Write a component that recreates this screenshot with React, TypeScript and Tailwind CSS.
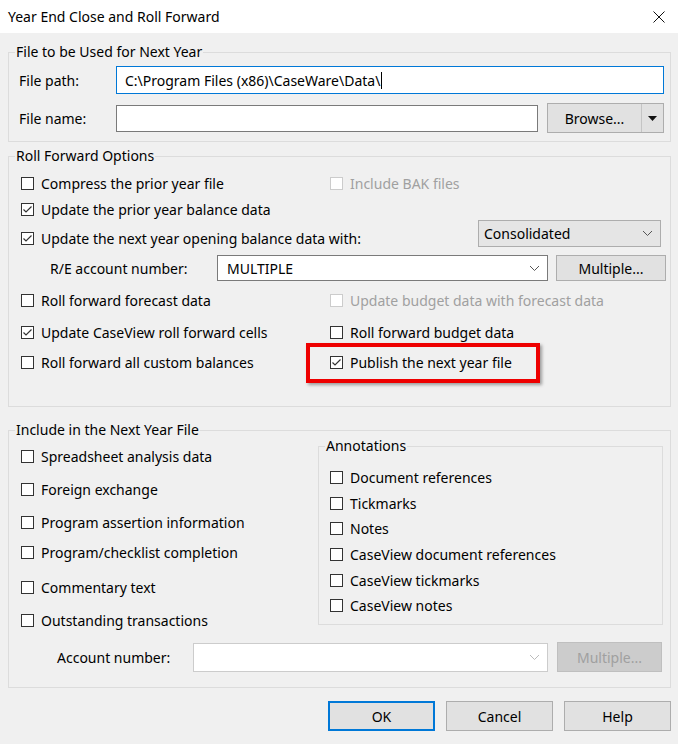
import { ReactNode } from 'react'

function Check({ label, checked = false, disabled = false }: { label: string; checked?: boolean; disabled?: boolean }) {
  return (
    <div className="flex items-center h-[20px]">
      <span
        className={
          'flex h-[13px] w-[13px] shrink-0 items-center justify-center border bg-white ' +
          (disabled ? 'border-[#cccccc]' : 'border-[#333333]')
        }
      >
        {checked && (
          <svg width="11" height="11" viewBox="0 0 11 11">
            <polyline points="1.5,5.5 4,8 9.5,2.5" fill="none" stroke="#333" strokeWidth="1.2" />
          </svg>
        )}
      </span>
      <span className={'ml-[7px] whitespace-nowrap ' + (disabled ? 'text-[#a0a0a0]' : 'text-black')}>{label}</span>
    </div>
  )
}

function Chevron({ color = '#555' }: { color?: string }) {
  return (
    <svg width="11" height="7" viewBox="0 0 11 7">
      <polyline points="1,1 5.5,5.5 10,1" fill="none" stroke={color} strokeWidth="1" />
    </svg>
  )
}

function Group({ title, className, children }: { title: string; className?: string; children: ReactNode }) {
  return (
    <fieldset className={'border border-[#dcdcdc] ' + (className ?? '')}>
      <legend className="ml-[6px] px-[1px] leading-[20px]">{title}</legend>
      {children}
    </fieldset>
  )
}

export default function App() {
  return (
    <div className="w-[678px] h-[744px] bg-[#f0f0f0] text-[14px] text-black font-['Noto_Sans',sans-serif] overflow-hidden">
      {/* Title bar */}
      <div className="flex h-[33px] items-center justify-between bg-white pl-[8px] pr-[13px]">
        <span className="text-[14px]">Year End Close and Roll Forward</span>
        <svg width="12" height="12" viewBox="0 0 12 12">
          <path d="M0.5 0.5 L11.5 11.5 M11.5 0.5 L0.5 11.5" stroke="#111" strokeWidth="1" />
        </svg>
      </div>

      <div className="pl-[8px] pr-[7px]">
        {/* File to be Used for Next Year */}
        <Group title="File to be Used for Next Year" className="mt-[9px]">
          <div className="pl-[10px] pr-[6px] pt-[4px] pb-[8px]">
            <div className="flex h-[28px] items-center">
              <span className="w-[97px]">File path:</span>
              <div className="flex h-[28px] flex-1 items-center border border-[#0078d7] bg-white px-[8px]">
                C:\Program Files (x86)\CaseWare\Data\<span className="ml-[1px] h-[17px] w-px bg-black" />
              </div>
            </div>
            <div className="mt-[9px] flex h-[30px] items-center">
              <span className="w-[97px]">File name:</span>
              <div className="h-[27px] w-[422px] border border-[#7a7a7a] bg-white" />
              <div className="ml-[9px] flex h-[30px] flex-1 border border-[#adadad] bg-[#e1e1e1]">
                <div className="flex flex-1 items-center justify-center border-r border-[#c4c4c4]">Browse...</div>
                <div className="flex w-[21px] items-center justify-center">
                  <svg width="9" height="5" viewBox="0 0 9 5">
                    <polygon points="0,0 9,0 4.5,5" fill="#111" />
                  </svg>
                </div>
              </div>
            </div>
          </div>
        </Group>

        {/* Roll Forward Options */}
        <Group title="Roll Forward Options" className="mt-[4px]">
          <div className="pl-[12px] pb-[31px] pt-[4px]">
            <div className="flex h-[26px] items-center">
              <div className="w-[309px]">
                <Check label="Compress the prior year file" />
              </div>
              <Check label="Include BAK files" disabled />
            </div>
            <div className="flex h-[27px] items-center">
              <Check label="Update the prior year balance data" checked />
            </div>
            <div className="flex h-[30px] items-center">
              <div className="w-[457px]">
                <Check label="Update the next year opening balance data with:" checked />
              </div>
              <div className="-mt-[9px] flex h-[27px] w-[183px] items-center justify-between border border-[#adadad] bg-[#e5e5e5] pl-[5px] pr-[7px]">
                <span>Consolidated</span>
                <Chevron />
              </div>
            </div>
            <div className="mt-[2px] flex h-[26px] items-center">
              <span className="ml-[29px] w-[167px]">R/E account number:</span>
              <div className="flex h-[26px] w-[331px] items-center justify-between border border-[#7a7a7a] bg-white pl-[9px] pr-[7px]">
                <span>MULTIPLE</span>
                <Chevron />
              </div>
              <div className="ml-[8px] flex h-[26px] w-[110px] items-center justify-center border border-[#adadad] bg-[#e1e1e1]">
                Multiple...
              </div>
            </div>
            <div className="mt-[6px] flex h-[26px] items-center">
              <div className="w-[309px]">
                <Check label="Roll forward forecast data" />
              </div>
              <Check label="Update budget data with forecast data" disabled />
            </div>
            <div className="mt-[6px] flex h-[26px] items-center">
              <div className="w-[309px]">
                <Check label="Update CaseView roll forward cells" checked />
              </div>
              <Check label="Roll forward budget data" />
            </div>
            <div className="mt-[4px] flex h-[26px] items-center">
              <div className="w-[309px]">
                <Check label="Roll forward all custom balances" />
              </div>
              <div className="relative">
                <Check label="Publish the next year file" checked />
                <div className="absolute left-[-24px] top-[-9px] h-[40px] w-[234px] border-[4px] border-[#ee0000] shadow-[2px_2px_3px_rgba(0,0,0,0.35)]" />
              </div>
            </div>
          </div>
        </Group>

        {/* Include in the Next Year File */}
        <Group title="Include in the Next Year File" className="mt-[13px]">
          <div className="pl-[12px] pb-[15px]">
            <div className="flex">
              <div className="w-[297px]">
                <div className="mt-[6px]"><Check label="Spreadsheet analysis data" /></div>
                <div className="mt-[13px]"><Check label="Foreign exchange" /></div>
                <div className="mt-[13px]"><Check label="Program assertion information" /></div>
                <div className="mt-[10px]"><Check label="Program/checklist completion" /></div>
                <div className="mt-[15px]"><Check label="Commentary text" /></div>
                <div className="mt-[13px]"><Check label="Outstanding transactions" /></div>
              </div>
              <fieldset className="-mt-[4px] h-[189px] w-[345px] border border-[#dcdcdc]">
                <legend className="ml-[6px] px-[1px] leading-[20px]">Annotations</legend>
                <div className="pl-[11px]">
                  <div className="mt-[11px]"><Check label="Document references" /></div>
                  <div className="mt-[6px]"><Check label="Tickmarks" /></div>
                  <div className="mt-[5px]"><Check label="Notes" /></div>
                  <div className="mt-[6px]"><Check label="CaseView document references" /></div>
                  <div className="mt-[6px]"><Check label="CaseView tickmarks" /></div>
                  <div className="mt-[5px]"><Check label="CaseView notes" /></div>
                </div>
              </fieldset>
            </div>
            <div className="mt-[12px] flex h-[30px] items-center">
              <span className="ml-[36px] w-[136px]">Account number:</span>
              <div className="flex h-[29px] w-[355px] items-center justify-end border border-[#cccccc] bg-white pr-[7px]">
                <Chevron color="#bbb" />
              </div>
              <div className="ml-[9px] flex h-[30px] w-[105px] items-center justify-center border border-[#bfbfbf] bg-[#cccccc] text-[#a0a0a0]">
                Multiple...
              </div>
            </div>
          </div>
        </Group>

        {/* Dialog buttons */}
        <div className="mt-[13px] flex justify-end gap-[11px]">
          <div className="flex h-[30px] w-[107px] items-center justify-center border-[2px] border-[#0078d7] bg-[#e1e1e1]">OK</div>
          <div className="flex h-[30px] w-[107px] items-center justify-center border border-[#adadad] bg-[#e1e1e1]">Cancel</div>
          <div className="flex h-[30px] w-[107px] items-center justify-center border border-[#adadad] bg-[#e1e1e1]">Help</div>
        </div>
      </div>
    </div>
  )
}
